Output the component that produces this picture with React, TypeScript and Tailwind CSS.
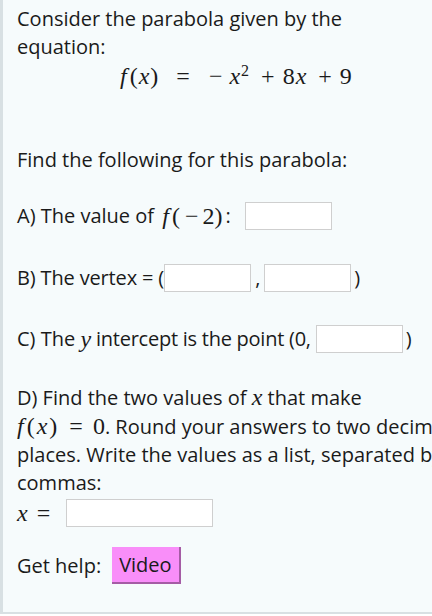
import React from "react";

const mathFont = { fontFamily: '"Liberation Serif", "DejaVu Serif", serif' };

// math run, rendered a bit larger than the body text like KaTeX does
function M({ children, className = "" }: { children: React.ReactNode; className?: string }) {
  return (
    <span className={`text-[24px] whitespace-nowrap ${className}`} style={mathFont}>
      {children}
    </span>
  );
}

function V({ children, className = "" }: { children: React.ReactNode; className?: string }) {
  return <i className={`italic inline-block ${className}`}>{children}</i>;
}

function G({ children, className = "" }: { children: React.ReactNode; className?: string }) {
  return <span className={`inline-block ${className}`}>{children}</span>;
}

function Box({ w = "w-[87px]" }: { w?: string }) {
  return (
    <input
      type="text"
      className={`${w} h-[28px] border border-[#cfcfcf] bg-white outline-none shrink-0`}
    />
  );
}

export default function App() {
  return (
    <div className="w-[432px] h-[616px] overflow-hidden bg-white">
      <div
        className="w-[450px] h-[614px] bg-[#f6fbfc] border-l-[3px] border-b-[2px] border-[#d8e0e3] pl-[14px] pt-[5px] text-[20px] leading-[28px] text-[#1a1a1a]"
        style={{ fontFamily: '"Open Sans", "Liberation Sans", sans-serif' }}
      >
        <p>
          Consider the parabola given by the
          <br />
          equation:
        </p>

        {/* displayed equation */}
        <div className="pl-[103px] h-[30px] leading-[30px]">
          <M>
            <V className="mr-[3px]">f</V>
            <G>(</G>
            <V className="mx-[1px]">x</V>
            <G>)</G>
            <G className="ml-[18px]">=</G>
            <G className="ml-[19px]">−</G>
            <V className="ml-[7px]">x</V>
            <sup className="text-[16px] ml-[1px]">2</sup>
            <G className="ml-[12px]">+</G>
            <G className="ml-[8px]">8</G>
            <V className="ml-[1px]">x</V>
            <G className="ml-[12px]">+</G>
            <G className="ml-[8px]">9</G>
          </M>
        </div>

        <p className="mt-[55px]">Find the following for this parabola:</p>

        <div className="mt-[26px] flex items-center h-[32px]">
          <span>A) The value of&nbsp;</span>
          <M className="ml-[3px]">
            <V className="mr-[3px]">f</V>
            <G>(</G>
            <G className="ml-[5px]">−</G>
            <G className="ml-[4px]">2</G>
            <G>)</G>
          </M>
          <span className="ml-[3px]">:</span>
          <span className="ml-[14px] flex">
            <Box />
          </span>
        </div>

        <div className="mt-[30px] flex items-center h-[32px]">
          <span className="tracking-[-0.15px]">B) The vertex = (</span>
          <Box />
          <span className="mx-[4px]">,</span>
          <Box />
          <span className="ml-[3px]">)</span>
        </div>

        <div className="mt-[29px] flex items-center h-[32px]">
          <span>C) The&nbsp;</span>
          <M>
            <V>y</V>
          </M>
          <span className="tracking-[-0.25px]">&nbsp;intercept is the point (0,&nbsp;</span>
          <Box />
          <span className="ml-[3px]">)</span>
        </div>

        <p className="mt-[28px] whitespace-nowrap">
          D) Find the two values of{" "}
          <M>
            <V>x</V>
          </M>{" "}
          that make
        </p>
        <p className="whitespace-nowrap">
          <M>
            <V className="mr-[3px]">f</V>
            <G>(</G>
            <V className="mx-[2px]">x</V>
            <G>)</G>
            <G className="ml-[12px]">=</G>
            <G className="ml-[10px]">0</G>
          </M>
          . Round your answers to two decimal
        </p>
        <p className="whitespace-nowrap">places. Write the values as a list, separated by</p>
        <p>commas:</p>
        <div className="flex items-center h-[32px]">
          <M>
            <V>x</V>
            <G className="ml-[9px]">=</G>
          </M>
          <span className="ml-[16px] flex">
            <Box w="w-[147px]" />
          </span>
        </div>

        <div className="mt-[18px] flex items-center">
          <span>Get help:</span>
          <button className="bg-[#f98ef9] border-r-2 border-b-2 border-[#a55ca5] px-[7px] h-[37px] text-[20px] text-[#1a1a1a] ml-[11px]">
            Video
          </button>
        </div>
      </div>
    </div>
  );
}
